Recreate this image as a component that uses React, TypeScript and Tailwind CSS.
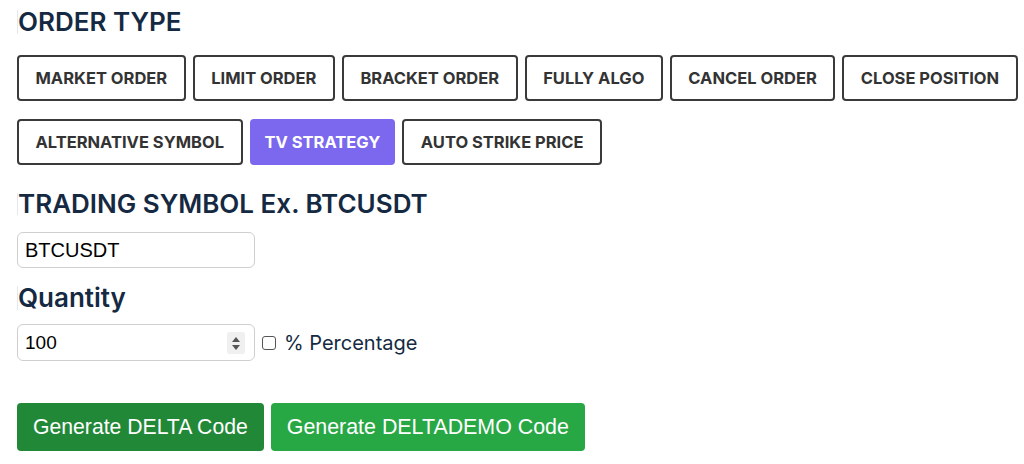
import React, { useState } from 'react';

const orderTypes = [
  ['MARKET ORDER', 'LIMIT ORDER', 'BRACKET ORDER', 'FULLY ALGO', 'CANCEL ORDER', 'CLOSE POSITION'],
  ['ALTERNATIVE SYMBOL', 'TV STRATEGY', 'AUTO STRIKE PRICE'],
];

const Heading: React.FC<{ children: React.ReactNode; className?: string }> = ({ children, className }) => (
  <div className={`border-l border-gray-200 font-semibold text-[#152a42] leading-none ${className ?? ''}`}>
    {children}
  </div>
);

export default function App() {
  const [active, setActive] = useState('TV STRATEGY');
  const [percent, setPercent] = useState(false);

  return (
    <div className="w-[1024px] h-[464px] bg-white px-[17px] pt-[10px] font-['Inter',sans-serif] overflow-hidden">
      <Heading className="text-[26px] h-[24px] flex items-center">ORDER TYPE</Heading>

      {/* Order type buttons */}
      <div className="mt-[21px] flex flex-col gap-[18px]">
        {orderTypes.map((row, i) => (
          <div key={i} className="flex gap-[7px]">
            {row.map((label) => {
              const on = label === active;
              return (
                <button
                  key={label}
                  onClick={() => setActive(label)}
                  className={
                    on
                      ? 'shrink-0 whitespace-nowrap h-[46px] px-[13px] rounded-[4px] border-2 border-[#7b68ee] bg-[#7b68ee] text-white text-[16.5px] font-bold'
                      : 'shrink-0 whitespace-nowrap h-[46px] px-[16.5px] rounded-[4px] border-2 border-[#3a3a3a] bg-white text-[#333] text-[16.5px] font-bold'
                  }
                >
                  {label}
                </button>
              );
            })}
          </div>
        ))}
      </div>

      <Heading className="mt-[28px] text-[26px] h-[22px] flex items-center">TRADING SYMBOL Ex. BTCUSDT</Heading>
      <input
        defaultValue="BTCUSDT"
        className="mt-[17px] block w-[238px] h-[36px] px-[7px] rounded-[6px] border border-[#cfcfcf] text-[20px] text-black font-['Liberation_Sans',sans-serif] outline-none"
      />

      <Heading className="mt-[18px] text-[26px] h-[24px] flex items-center font-medium">Quantity</Heading>
      <div className="mt-[14px] flex items-center gap-[7px]">
        <div className="relative w-[238px] h-[37px] rounded-[6px] border border-[#cfcfcf] flex items-center">
          <input
            defaultValue="100"
            className="w-full h-full px-[7px] rounded-[6px] text-[19px] text-black font-['Liberation_Sans',sans-serif] outline-none bg-transparent"
          />
          <div className="absolute right-[9px] top-[7px] w-[18px] h-[22px] bg-[#f0f0f0] rounded-[2px] flex flex-col items-center justify-center gap-[3px]">
            <svg width="8" height="5" viewBox="0 0 8 5"><path d="M0 5 L4 0 L8 5 Z" fill="#555" /></svg>
            <svg width="8" height="5" viewBox="0 0 8 5"><path d="M0 0 L4 5 L8 0 Z" fill="#555" /></svg>
          </div>
        </div>
        <label className="flex items-center gap-[8px] text-[20px] text-[#152a42] cursor-pointer">
          <span
            onClick={() => setPercent(!percent)}
            className="w-[14px] h-[14px] rounded-[3px] border border-[#555] bg-white flex items-center justify-center text-[10px]"
          >
            {percent ? '✓' : ''}
          </span>
          % Percentage
        </label>
      </div>

      {/* Generate buttons */}
      <div className="mt-[42px] flex gap-[7px]">
        <button className="whitespace-nowrap h-[48px] px-[16px] rounded-[4px] bg-[#218838] text-white text-[21.2px] font-['Liberation_Sans',sans-serif]">
          Generate DELTA Code
        </button>
        <button className="whitespace-nowrap h-[48px] px-[16px] rounded-[4px] bg-[#28a745] text-white text-[21.4px] font-['Liberation_Sans',sans-serif]">
          Generate DELTADEMO Code
        </button>
      </div>
    </div>
  );
}
